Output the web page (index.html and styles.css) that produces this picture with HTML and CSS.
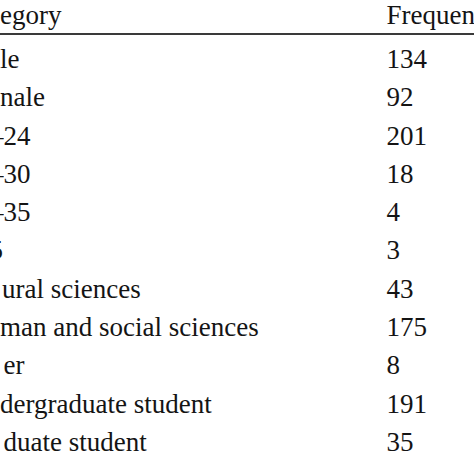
FILE: index.html
```html
<!DOCTYPE html>
<html>
<head>
<meta charset="utf-8">
<link rel="stylesheet" href="styles.css">
</head>
<body>
<div class="sheet">
  <div class="row head">
    <div class="cat">egory</div>
    <div class="num">Frequen</div>
  </div>
  <div class="rows">
    <div class="row"><div class="cat">le</div><div class="num">134</div></div>
    <div class="row"><div class="cat">nale</div><div class="num">92</div></div>
    <div class="row"><div class="cat"><span class="clip c4"><span class="pull">–</span></span>24</div><div class="num">201</div></div>
    <div class="row"><div class="cat"><span class="clip c4"><span class="pull">–</span></span>30</div><div class="num">18</div></div>
    <div class="row"><div class="cat"><span class="clip c4"><span class="pull">–</span></span>35</div><div class="num">4</div></div>
    <div class="row"><div class="cat"><span class="clip c3"><span class="pull5">5</span></span></div><div class="num">3</div></div>
    <div class="row"><div class="cat in2">ural sciences</div><div class="num">43</div></div>
    <div class="row"><div class="cat">man and social sciences</div><div class="num">175</div></div>
    <div class="row"><div class="cat in3">er</div><div class="num">8</div></div>
    <div class="row"><div class="cat">dergraduate student</div><div class="num">191</div></div>
    <div class="row"><div class="cat in3">duate student</div><div class="num">35</div></div>
  </div>
</div>
</body>
</html>
```
FILE: styles.css
```css
body {
  margin: 0;
  background: #ffffff;
}
.sheet {
  width: 474px;
}
.row {
  display: flex;
}
.cat {
  font-family: "Liberation Serif";
  font-size: 27px;
  color: #141414;
  white-space: nowrap;
  width: 386.5px;
  flex: none;
}
.num {
  font-family: "Liberation Serif";
  font-size: 27px;
  color: #141414;
  white-space: nowrap;
}
.clip,
.pull,
.pull5 {
  font-family: "Liberation Serif";
}
.in2 {
  padding-left: 2px;
  box-sizing: border-box;
}
.in3 {
  padding-left: 3.5px;
  box-sizing: border-box;
}
.head {
  padding-top: 1px;
  padding-bottom: 3px;
  border-bottom: 2px solid #3a3a3a;
}
.head .cat,
.head .num {
  line-height: 29px;
}
.rows {
  padding-top: 5px;
}
.rows .row {
  height: 38.3px;
}
.rows .cat,
.rows .num {
  line-height: 38px;
}
.clip {
  display: inline-block;
  overflow: hidden;
  vertical-align: top;
  height: 38px;
  line-height: 38px;
}
.c4 {
  width: 3.5px;
}
.c3 {
  width: 3px;
}
.pull {
  margin-left: -10px;
}
.pull5 {
  margin-left: -10.5px;
}
```
